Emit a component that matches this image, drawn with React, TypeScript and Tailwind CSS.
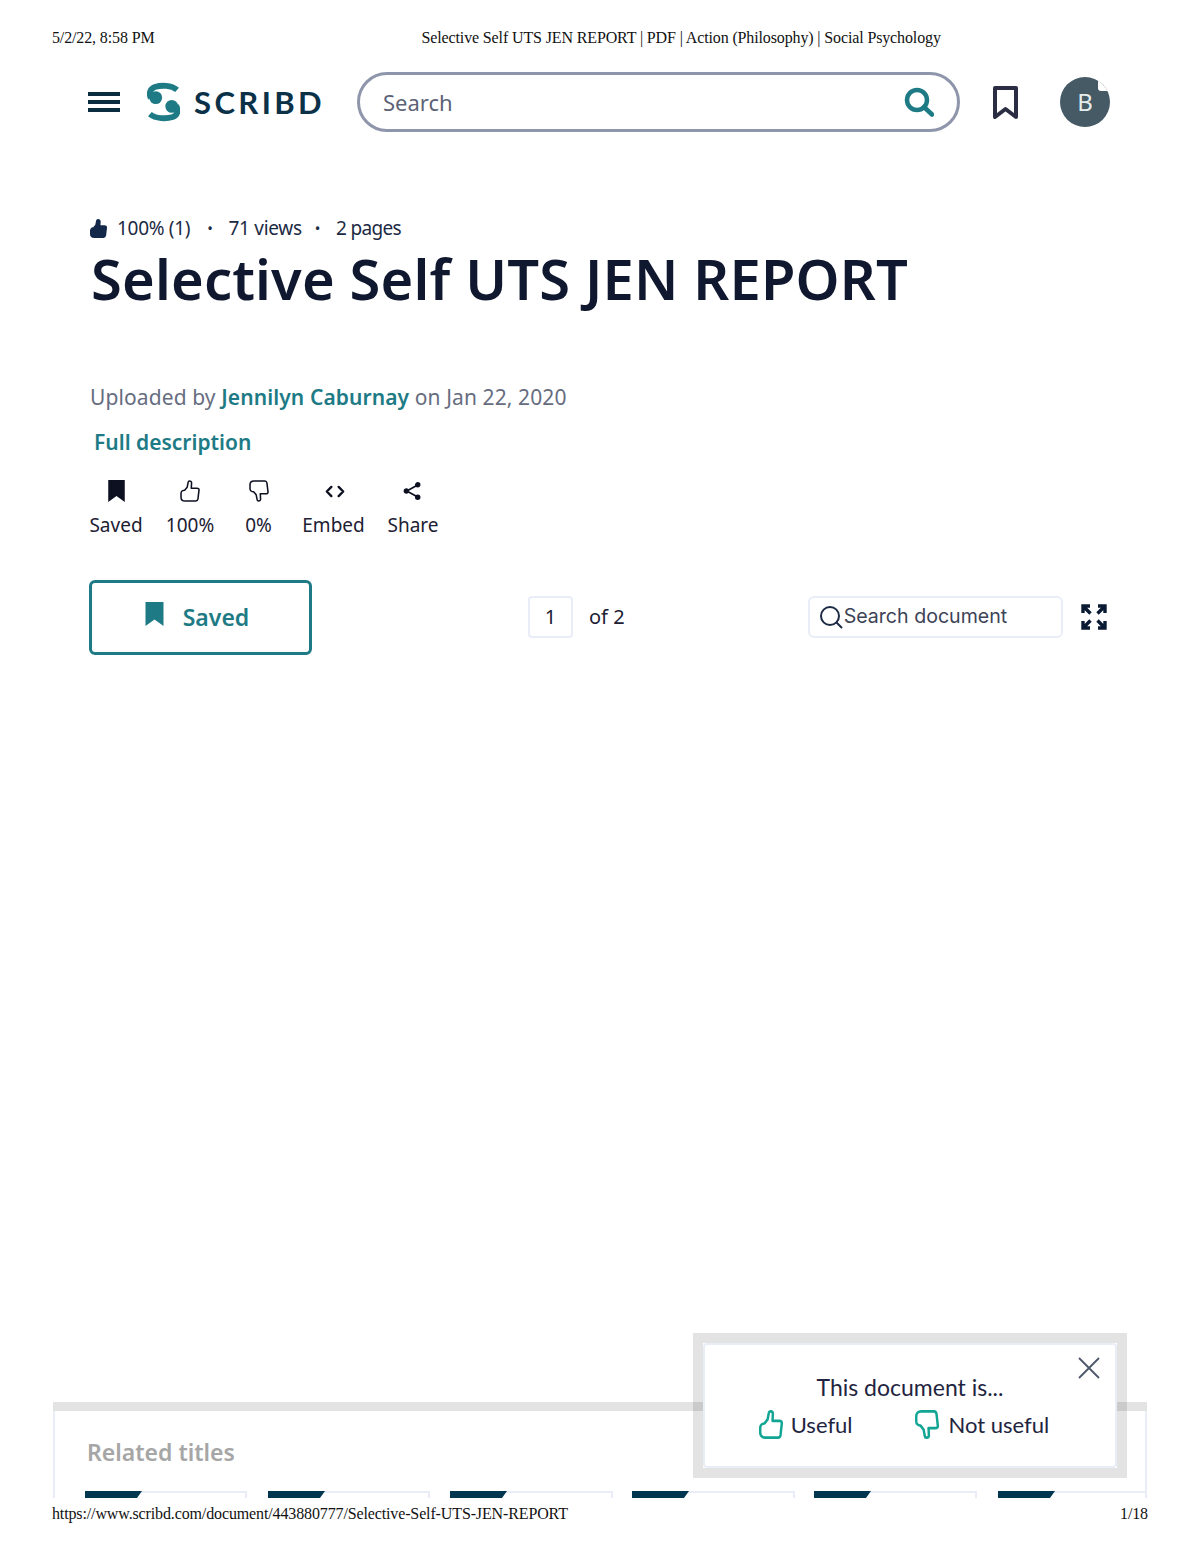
import React from "react";

const sans = "font-['Noto_Sans','Liberation_Sans',sans-serif]";
const serif = "font-['Liberation_Serif',serif]";

function Thumb({ className = "", fill = "none", down = false, sw = 2 }: { className?: string; fill?: string; down?: boolean; sw?: number }) {
  return (
    <svg viewBox="2.5 1 19.5 21.5" preserveAspectRatio="none" className={className} fill={fill} stroke="currentColor" strokeWidth={sw} strokeLinejoin="round" strokeLinecap="round" style={down ? { transform: "rotate(180deg) scaleX(-1)" } : undefined}>
      <path d="M7 11 L9.5 8 L10.5 3 C10.7 1.6 13.6 1.6 13.8 3.6 L13.5 9 H19 C20.5 9 21.3 10 21 11.2 L20 19.5 C19.8 20.6 19 21.5 18 21.5 H7.5 C5 21.5 3.5 20 3.5 18 V14 C3.5 12.5 5 11 7 11 Z" />
    </svg>
  );
}

function BookmarkSolid({ className = "" }: { className?: string }) {
  return (
    <svg viewBox="0 0 18 24" className={className} fill="currentColor">
      <path d="M0 0 H18 V24 L9 17.5 L0 24 Z" />
    </svg>
  );
}

function Logo() {
  return (
    <svg viewBox="0 0 34 40" className="w-[33px] h-[40px] shrink-0" fill="none" stroke="#1e7b85" strokeWidth="6">
      <path d="M31 7.5 C25 2.5 15 2.5 8 4.5 C2.5 6.5 2 12 4 16" />
      <circle cx="9" cy="15.5" r="6.6" fill="#1e7b85" stroke="none" />
      <circle cx="25.5" cy="24.5" r="6.6" fill="#1e7b85" stroke="none" />
      <path d="M3 32.5 C9 37.5 20 37.5 26.5 35.5 C32 33.5 32.5 28 30 24" />
    </svg>
  );
}

function Action({ icon, label, w }: { icon: React.ReactNode; label: string; w: string }) {
  return (
    <div className={`flex flex-col items-center ${w}`}>
      <div className="h-[24px] flex items-center justify-center text-[#0d1020]">{icon}</div>
      <div className="mt-[10px] text-[19px] leading-[24px] text-[#1c2033] whitespace-nowrap">{label}</div>
    </div>
  );
}

function Card({ w, mr }: { w: string; mr: string }) {
  return (
    <div className={`${w} ${mr} h-[40px] shrink-0 border-t-2 border-x-2 border-[#e9edf8] relative`}>
      <svg viewBox="0 0 57 7" className="absolute -top-[2px] -left-[2px] w-[57px] h-[7px]" fill="#00364f">
        <path d="M0 0 H57 L52 7 H0 Z" />
      </svg>
    </div>
  );
}

export default function App() {
  return (
    <div className={`relative w-[1200px] h-[1553px] bg-white overflow-hidden flex flex-col ${sans}`}>
      {/* print header */}
      <div className={`${serif} mt-[28px] h-[20px] leading-[20px] text-[16px] tracking-[-0.13px] text-[#111] relative flex px-[52px]`}>
        <span className="whitespace-nowrap">5/2/22, 8:58 PM</span>
        <span className="whitespace-nowrap ml-[267px]">Selective Self UTS JEN REPORT | PDF | Action (Philosophy) | Social Psychology</span>
      </div>

      {/* nav */}
      <div className="mt-[24px] h-[60px] flex items-center pl-[88px]">
        <div className="w-[32px] flex flex-col gap-[3.5px]">
          <div className="h-[4.5px] bg-[#0a2c3f]" />
          <div className="h-[4.5px] bg-[#0a2c3f]" />
          <div className="h-[4.5px] bg-[#0a2c3f]" />
        </div>
        <div className="ml-[27px] w-[174px] flex items-center">
          <Logo />
          <span className="ml-[14px] font-['Lato',sans-serif] font-bold text-[31px] leading-none tracking-[3.4px] text-[#0a3148]">SCRIBD</span>
        </div>
        <div className="ml-[36px] w-[603px] h-[60px] rounded-full border-[3px] border-[#8f96ab] flex items-center pl-[23px] pr-[23px] justify-between">
          <span className="text-[22px] text-[#5c6376]">Search</span>
          <svg viewBox="0 0 30 30" className="w-[30px] h-[30px]" fill="none" stroke="#1e7b85" strokeWidth="4.5">
            <circle cx="13" cy="13" r="10" />
            <path d="M20 20 L28 27.5" strokeLinecap="round" />
          </svg>
        </div>
        <svg viewBox="0 0 25 33" className="ml-[33px] w-[25px] h-[33px]" fill="none" stroke="#2b2e42" strokeWidth="4" strokeLinejoin="round">
          <path d="M2 2 H23 V31 L12.5 23 L2 31 Z" />
        </svg>
        <div className="ml-[42px] w-[50px] h-[50px] rounded-full bg-[#455a64] text-[#e6ecec] flex items-center justify-center text-[24px] relative overflow-hidden">
          B
          <div className="absolute top-[-4px] right-[-4px] w-[16px] h-[18px] bg-white rounded-bl-[3px]" />
        </div>
      </div>

      {/* meta */}
      <div className="mt-[84px] h-[24px] pl-[90px] flex items-center text-[19px] tracking-[-0.3px] text-[#1c2a44] whitespace-nowrap">
        <Thumb className="w-[17px] h-[19px] text-[#14294a]" fill="#14294a" />
        <span className="ml-[10px]">100% (1)</span>
        <span className="ml-[17px] text-[15px]">•</span>
        <span className="ml-[16px]">71 views</span>
        <span className="ml-[13px] text-[15px]">•</span>
        <span className="ml-[16px] tracking-[-0.7px]">2 pages</span>
      </div>

      {/* title */}
      <h1 className="mt-[6px] h-[64px] pl-[91px] text-[56px] leading-[64px] font-semibold tracking-[0.18px] text-[#10182f] whitespace-nowrap">Selective Self UTS JEN REPORT</h1>

      <div className="mt-[73px] h-[28px] pl-[90px] text-[21px] leading-[28px] tracking-[0.1px] text-[#666d80] whitespace-nowrap">
        Uploaded by <span className="font-semibold text-[#1e7b85]">Jennilyn Caburnay</span> on Jan 22, 2020
      </div>

      <div className="mt-[19px] h-[24px] pl-[94px] text-[21px] leading-[24px] font-semibold text-[#1e7b85]">Full description</div>

      {/* actions */}
      <div className="mt-[25px] pl-[90px] flex gap-[24px]">
        <Action w="w-[52px]" label="Saved" icon={<BookmarkSolid className="w-[17px] h-[22px]" />} />
        <Action w="w-[48px]" label="100%" icon={<Thumb className="w-[20px] h-[22px]" sw={1.5} />} />
        <Action w="w-[41px]" label="0%" icon={<Thumb className="w-[20px] h-[22px]" sw={1.5} down />} />
        <Action w="w-[61px]" label="Embed" icon={
          <svg viewBox="0 0 22 14" className="w-[20px] h-[13px] ml-[3px]" fill="none" stroke="currentColor" strokeWidth="2.6" strokeLinecap="round" strokeLinejoin="round">
            <path d="M7 2 L2 7 L7 12 M15 2 L20 7 L15 12" />
          </svg>
        } />
        <Action w="w-[50px]" label="Share" icon={
          <svg viewBox="0 0 20 20" className="w-[19px] h-[20px] -ml-[2px]" fill="currentColor" stroke="currentColor" strokeWidth="1.8">
            <path d="M15 4 L4 10 L15 16" fill="none" />
            <circle cx="15.5" cy="3.5" r="2" /><circle cx="3.5" cy="10" r="2" /><circle cx="15.5" cy="16.5" r="2" />
          </svg>
        } />
      </div>

      {/* controls */}
      <div className="mt-[43px] h-[75px] pl-[89px] flex items-center">
        <div className="w-[223px] h-[75px] rounded-[6px] border-[3px] border-[#1e7b85] flex items-center justify-center gap-[19px] text-[#1e7b85] text-[23px] font-semibold pr-[7px] pb-[1px]">
          <BookmarkSolid className="w-[19px] h-[24px] -mt-[6px]" />
          <span>Saved</span>
        </div>
        <div className="flex items-center mb-[2px]">
          <div className="ml-[216px] w-[45px] h-[42px] rounded-[4px] border-2 border-[#e9edf8] flex items-center justify-center text-[20px] text-[#1c2033]">1</div>
          <span className="ml-[16px] text-[20px] text-[#1c2033]">of 2</span>
          <div className="ml-[183px] w-[255px] h-[42px] rounded-[6px] border-2 border-[#e9edf8] flex items-center pl-[9px] text-[19.6px] text-[#3d4356] whitespace-nowrap font-['Inter',sans-serif]">
            <svg viewBox="0 0 24 24" className="w-[24px] h-[24px] text-[#1c2a44]" fill="none" stroke="currentColor" strokeWidth="2">
              <circle cx="11" cy="11" r="9" />
              <path d="M17.5 17.5 L23 23" />
            </svg>
            <span className="ml-[1px]">Search document</span>
          </div>
          <svg viewBox="0 0 26 26" className="ml-[18px] w-[26px] h-[26px]" fill="none" stroke="#0b1a33" strokeWidth="3.4">
            <path d="M2 9 V2 H9 M2 2 L9.5 9.5" />
            <path d="M24 9 V2 H17 M24 2 L16.5 9.5" />
            <path d="M2 17 V24 H9 M2 24 L9.5 16.5" />
            <path d="M24 17 V24 H17 M24 24 L16.5 16.5" />
          </svg>
        </div>
      </div>

      <div className="flex-1" />

      {/* related */}
      <div className="mx-[53px] h-[96px] border-t-[9px] border-[#e3e3e3] overflow-hidden">
        <div className="h-full border-x-2 border-[#e9edf8] pl-[32px] pt-[27px]">
          <div className="h-[28px] text-[23px] leading-[28px] font-semibold text-[#a6a6a6]">Related titles</div>
          <div className="mt-[25px] -ml-[2px] flex">
            <Card w="w-[162px]" mr="mr-[21px]" />
            <Card w="w-[162px]" mr="mr-[20px]" />
            <Card w="w-[163px]" mr="mr-[19px]" />
            <Card w="w-[163px]" mr="mr-[19px]" />
            <Card w="w-[163px]" mr="mr-[21px]" />
            <Card w="w-[163px]" mr="mr-[0px]" />
          </div>
        </div>
      </div>

      {/* print footer */}
      <div className={`${serif} mt-[6px] h-[20px] mb-[29px] leading-[20px] text-[16px] tracking-[-0.13px] text-[#111] flex justify-between px-[52px]`}>
        <span>https://www.scribd.com/document/443880777/Selective-Self-UTS-JEN-REPORT</span>
        <span>1/18</span>
      </div>

      {/* feedback popup */}
      <div className="absolute left-[693px] top-[1333px] w-[434px] h-[145px] border-[10px] border-black/[0.11] bg-clip-padding">
        <div className="relative w-full h-full bg-white rounded-[4px] border-2 border-[#e9edf8] flex flex-col items-center pt-[28px]">
          <svg viewBox="0 0 24 24" className="absolute top-[11px] right-[14px] w-[24px] h-[24px]" fill="none" stroke="#4d5568" strokeWidth="1.8">
            <path d="M2 2 L22 22 M22 2 L2 22" />
          </svg>
          <div className="text-[23px] leading-[28px] text-[#1f2540] font-['Lato',sans-serif]">This document is...</div>
          <div className="mt-[9px] -ml-[1px] mr-[11px] flex items-center text-[22px] leading-[28px] text-[#1f2540] font-['Lato',sans-serif]">
            <Thumb className="w-[24px] h-[29px] text-[#12a594]" sw={2} />
            <span className="ml-[8px]">Useful</span>
            <Thumb className="ml-[62px] w-[24px] h-[29px] text-[#12a594]" sw={2} down />
            <span className="ml-[10px]">Not useful</span>
          </div>
        </div>
      </div>
    </div>
  );
}
